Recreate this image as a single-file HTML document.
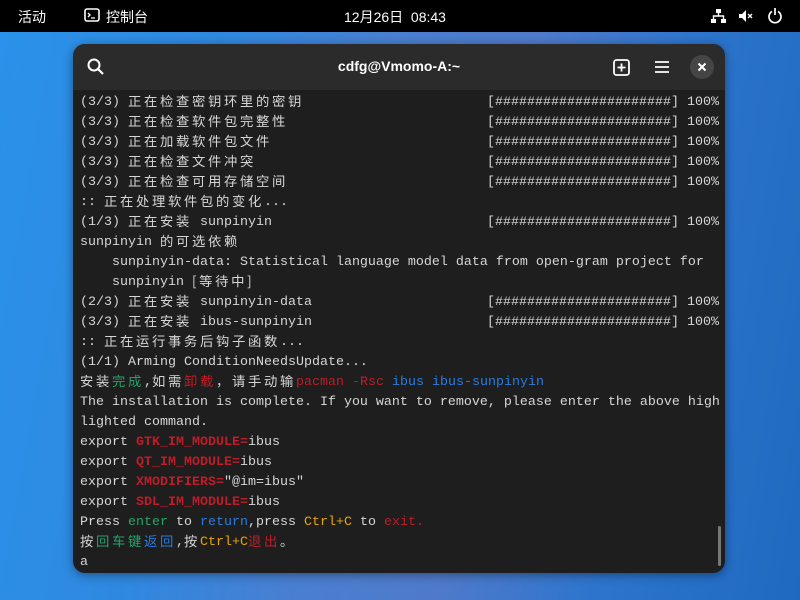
<!DOCTYPE html>
<html><head><meta charset="utf-8"><style>
*{margin:0;padding:0;box-sizing:border-box}
body{width:800px;height:600px;overflow:hidden;position:relative;background:linear-gradient(100deg,#2a92ea 0%,#2f88e0 25%,#4a7ed0 45%,#4f7acb 60%,#2c74cc 78%,#1f6ac0 100%);font-family:"Liberation Sans","Noto Sans CJK SC",sans-serif}
.top{position:absolute;left:0;top:0;width:800px;height:32px;background:#000;color:#fff;font-size:14px}
.top span{position:absolute;top:7px;white-space:pre}
.win{position:absolute;left:73px;top:44px;width:652px;height:529px;background:#1e1e1e;border-radius:12px;overflow:hidden;box-shadow:0 2px 10px rgba(0,0,0,.4)}
.hdr{position:absolute;left:0;top:0;width:652px;height:46px;background:#2b2b2b;color:#fff}
.term{position:absolute;left:7px;top:49px;font-family:"Liberation Mono","Noto Sans CJK SC",monospace;font-size:13.33px;color:#d6d6d6}
.l{height:20px;line-height:20px;position:relative;white-space:pre;display:flex;align-items:flex-start;overflow:visible}
.c{letter-spacing:2.67px;font-family:"Noto Sans CJK SC",sans-serif;line-height:20px;position:relative;top:-2px}
.p{position:absolute;left:407px;top:0}
.g{color:#26a269}.r{color:#c01c28}.b{color:#2a7bde}.y{color:#e5a50a}.rb{color:#c01c28;font-weight:bold}
</style></head><body>
<div class="top">
<span style="left:18px">活动</span>
<svg style="position:absolute;left:84px;top:8px" width="16" height="15"><rect x="1" y="1" width="14" height="12" rx="2" fill="none" stroke="#fff" stroke-width="1.6"/><path d="M4 5l2 2-2 2M7 10h4" stroke="#fff" stroke-width="1.3" fill="none"/></svg>
<span style="left:106px">控制台</span>
<span style="left:344px">12月26日  08:43</span>
<svg style="position:absolute;left:710px;top:8px" width="17" height="16"><rect x="6" y="1" width="5" height="4" fill="#fff"/><rect x="1" y="11" width="5" height="4" fill="#fff"/><rect x="11" y="11" width="5" height="4" fill="#fff"/><path d="M8.5 5v3M3.5 11V8h10v3" stroke="#fff" stroke-width="1.4" fill="none"/></svg>
<svg style="position:absolute;left:738px;top:9px" width="16" height="14"><path d="M1 5h3l4-4v12l-4-4H1z" fill="#fff"/><path d="M10 5l4 4M14 5l-4 4" stroke="#fff" stroke-width="1.3"/></svg>
<svg style="position:absolute;left:767px;top:7px" width="16" height="17"><path d="M5 4.5A6 6 0 1 0 11 4.5" stroke="#fff" stroke-width="1.7" fill="none"/><path d="M8 1v7" stroke="#fff" stroke-width="1.7"/></svg>
</div>
<div class="win">
<div class="hdr">
<svg style="position:absolute;left:14px;top:14px" width="18" height="18"><circle cx="7" cy="7" r="5.5" stroke="#fff" stroke-width="2" fill="none"/><path d="M11 11l5 5" stroke="#fff" stroke-width="2.2"/></svg>
<div style="position:absolute;left:0;width:652px;top:14px;text-align:center;font-size:14px;font-weight:bold">cdfg@Vmomo-A:~</div>
<svg style="position:absolute;left:540px;top:15px" width="17" height="17"><rect x="1" y="1" width="15" height="15" rx="2.5" stroke="#fff" stroke-width="1.8" fill="none"/><path d="M8.5 4.5v8M4.5 8.5h8" stroke="#fff" stroke-width="1.8"/></svg>
<svg style="position:absolute;left:581px;top:16px" width="16" height="14"><path d="M1 2h14M1 7h14M1 12h14" stroke="#fff" stroke-width="1.8"/></svg>
<div style="position:absolute;left:617px;top:11px;width:24px;height:24px;border-radius:12px;background:#454545"></div>
<svg style="position:absolute;left:624px;top:18px" width="10" height="10"><path d="M1.5 1.5l7 7M8.5 1.5l-7 7" stroke="#fff" stroke-width="2"/></svg>
</div>
<div style="position:absolute;left:645px;top:482px;width:3px;height:40px;background:#777;border-radius:2px"></div>
<div class="term"><div class="l">(3/3) <span class="c">正在检查密钥环里的密钥</span><span class="p">[######################] 100%</span></div><div class="l">(3/3) <span class="c">正在检查软件包完整性</span><span class="p">[######################] 100%</span></div><div class="l">(3/3) <span class="c">正在加载软件包文件</span><span class="p">[######################] 100%</span></div><div class="l">(3/3) <span class="c">正在检查文件冲突</span><span class="p">[######################] 100%</span></div><div class="l">(3/3) <span class="c">正在检查可用存储空间</span><span class="p">[######################] 100%</span></div><div class="l">:: <span class="c">正在处理软件包的变化</span>...</div><div class="l">(1/3) <span class="c">正在安装</span> sunpinyin<span class="p">[######################] 100%</span></div><div class="l">sunpinyin <span class="c">的可选依赖</span></div><div class="l">    sunpinyin-data: Statistical language model data from open-gram project for</div><div class="l">    sunpinyin <span class="c">[等待中]</span></div><div class="l">(2/3) <span class="c">正在安装</span> sunpinyin-data<span class="p">[######################] 100%</span></div><div class="l">(3/3) <span class="c">正在安装</span> ibus-sunpinyin<span class="p">[######################] 100%</span></div><div class="l">:: <span class="c">正在运行事务后钩子函数</span>...</div><div class="l">(1/1) Arming ConditionNeedsUpdate...</div><div class="l"><span class="c">安装</span><span class="c g">完成</span>,<span class="c">如需</span><span class="c r">卸载</span><span class="c">，请手动输</span><span class="r">pacman -Rsc </span><span class="b">ibus ibus-sunpinyin</span></div><div class="l">The installation is complete. If you want to remove, please enter the above high</div><div class="l">lighted command.</div><div class="l">export <span class="rb">GTK_IM_MODULE=</span>ibus</div><div class="l">export <span class="rb">QT_IM_MODULE=</span>ibus</div><div class="l">export <span class="rb">XMODIFIERS=</span>"@im=ibus"</div><div class="l">export <span class="rb">SDL_IM_MODULE=</span>ibus</div><div class="l">Press <span class="g">enter</span> to <span class="b">return</span>,press <span class="y">Ctrl+C</span> to <span class="r">exit.</span></div><div class="l"><span class="c">按</span><span class="c g">回车键</span><span class="c b">返回</span>,<span class="c">按</span><span class="y">Ctrl+C</span><span class="c r">退出</span><span class="c">。</span></div><div class="l">a</div></div>
</div>
</body></html>
